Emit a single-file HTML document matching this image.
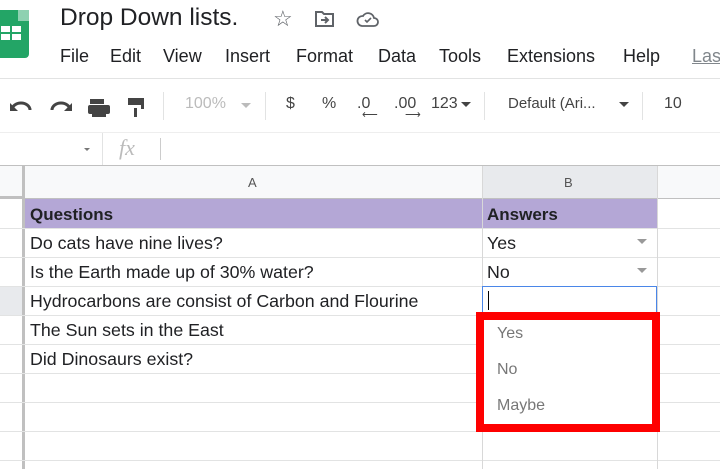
<!DOCTYPE html><html><head><style>
body{margin:0;width:720px;height:469px;overflow:hidden;background:#fff;font-family:"Liberation Sans",Arial,sans-serif;position:relative}
.a{position:absolute}
.m{font-size:18px;color:#202124;top:46px}
.t{color:#444;font-size:16px;top:95px}
.hl{position:absolute;left:0;width:720px;height:1px;background:#e2e3e3}
.vl{position:absolute;width:1px;background:#e2e3e3}
.c{position:absolute;font-size:17.8px;color:#202124;left:30px}
</style></head><body>
<div class="a" style="left:-6px;top:10px;width:35px;height:48px;background:#23a566;border-radius:4px"></div>
<div class="a" style="left:18px;top:10px;width:11px;height:11px;background:#8ed1b1"></div>
<div class="a" style="left:1px;top:26px;width:9px;height:6px;background:#fff"></div>
<div class="a" style="left:12px;top:26px;width:9px;height:6px;background:#fff"></div>
<div class="a" style="left:1px;top:34px;width:9px;height:6px;background:#fff"></div>
<div class="a" style="left:12px;top:34px;width:9px;height:6px;background:#fff"></div>
<div class="a" style="left:60px;top:4px;font-size:24.5px;color:#202124">Drop Down lists.</div>
<div class="a" style="left:273px;top:6px;font-size:22px;color:#5f6368">☆</div>
<svg class="a" style="left:314px;top:10px" width="22" height="18" viewBox="0 0 22 18"><path d="M2 2h6l2 2h9v12H2z" fill="none" stroke="#5f6368" stroke-width="2"/><path d="M7 10h7M11 7l3 3-3 3" fill="none" stroke="#5f6368" stroke-width="2"/></svg>
<svg class="a" style="left:356px;top:10px" width="24" height="18" viewBox="0 0 24 18"><path d="M6 16h12a4 4 0 0 0 0-8 6 6 0 0 0-11-2A5 5 0 0 0 6 16z" fill="none" stroke="#5f6368" stroke-width="1.8"/><path d="M9 10l2 2 4-4" fill="none" stroke="#5f6368" stroke-width="1.6"/></svg>
<div class="a m" style="left:60px">File</div>
<div class="a m" style="left:110px">Edit</div>
<div class="a m" style="left:163px">View</div>
<div class="a m" style="left:225px">Insert</div>
<div class="a m" style="left:296px">Format</div>
<div class="a m" style="left:378px">Data</div>
<div class="a m" style="left:439px">Tools</div>
<div class="a m" style="left:507px">Extensions</div>
<div class="a m" style="left:623px">Help</div>
<div class="a m" style="left:692px;color:#80868b;text-decoration:underline">Las</div>
<div class="hl" style="top:78px"></div>
<svg class="a" style="left:8px;top:96px" width="140" height="24" viewBox="0 0 140 24"><path d="M4 14a9 7 0 0 1 18 0" fill="none" stroke="#444" stroke-width="3"/><path d="M2 7v8h8z" fill="#444"/><path d="M62 14a9 7 0 0 0-18 0" fill="none" stroke="#444" stroke-width="3"/><path d="M64 7v8h-8z" fill="#444"/><rect x="82" y="3" width="14" height="5" fill="#444"/><rect x="80" y="9" width="22" height="9" rx="2" fill="#444"/><rect x="84" y="15" width="14" height="6" fill="#444"/><rect x="120" y="2" width="16" height="7" fill="#444"/><rect x="133" y="7" width="3" height="6" fill="#444"/><rect x="126" y="12" width="3" height="9" fill="#444"/></svg>
<div class="vl" style="left:163px;top:92px;height:28px"></div>
<div class="a t" style="left:185px;color:#bbb">100%</div>
<div class="a" style="left:241px;top:103px;border:5px solid transparent;border-top-color:#bbb"></div>
<div class="vl" style="left:265px;top:92px;height:28px"></div>
<div class="a t" style="left:286px">$</div>
<div class="a t" style="left:322px">%</div>
<div class="a t" style="left:357px">.0</div>
<div class="a" style="left:362px;top:108px;font-size:11px;color:#444">⟵</div>
<div class="a t" style="left:394px">.00</div>
<div class="a" style="left:405px;top:108px;font-size:11px;color:#444">⟶</div>
<div class="a t" style="left:431px">123</div>
<div class="a" style="left:461px;top:102px;border:5px solid transparent;border-top-color:#444"></div>
<div class="vl" style="left:484px;top:92px;height:28px"></div>
<div class="a t" style="left:508px;font-size:15px">Default (Ari...</div>
<div class="a" style="left:619px;top:102px;border:5px solid transparent;border-top-color:#444"></div>
<div class="vl" style="left:642px;top:92px;height:28px"></div>
<div class="a t" style="left:664px">10</div>
<div class="hl" style="top:132px;background:#eee"></div>
<div class="a" style="left:84px;top:148px;border:3.5px solid transparent;border-top-color:#777"></div>
<div class="vl" style="left:102px;top:133px;height:32px"></div>
<div class="a" style="left:119px;top:135px;font-size:22px;font-style:italic;font-family:'Liberation Serif',serif;color:#bbb">fx</div>
<div class="vl" style="left:160px;top:138px;height:22px;background:#ccc"></div>
<div class="hl" style="top:165px;background:#c0c0c0"></div>
<div class="a" style="left:0;top:166px;width:720px;height:32px;background:#f8f9fa"></div>
<div class="a" style="left:482px;top:166px;width:175px;height:32px;background:#e8eaed"></div>
<div class="a" style="left:22px;top:166px;width:3px;height:303px;background:#c0c0c0"></div>
<div class="a" style="left:0;top:196px;width:25px;height:3px;background:#c0c0c0"></div>
<div class="a" style="left:0;top:198px;width:720px;height:1px;background:#c0c0c0"></div>
<div class="a" style="left:248px;top:175px;font-size:13px;color:#555">A</div>
<div class="a" style="left:564px;top:175px;font-size:13px;color:#555">B</div>
<div class="a" style="left:0;top:287px;width:22px;height:28px;background:#e8eaed"></div>
<div class="a" style="left:25px;top:199px;width:632px;height:29px;background:#b4a7d6"></div>
<div class="hl" style="top:228px"></div><div class="hl" style="top:257px"></div><div class="hl" style="top:286px"></div>
<div class="hl" style="top:315px"></div><div class="hl" style="top:344px"></div><div class="hl" style="top:373px"></div>
<div class="hl" style="top:402px"></div><div class="hl" style="top:431px"></div><div class="hl" style="top:460px"></div>
<div class="vl" style="left:482px;top:166px;height:303px;background:#d8d8d8"></div>
<div class="vl" style="left:657px;top:166px;height:303px;background:#d8d8d8"></div>
<div class="c" style="top:205px;font-weight:bold;font-size:17px">Questions</div>
<div class="c" style="left:487px;top:205px;font-weight:bold;font-size:17px">Answers</div>
<div class="c" style="top:233px">Do cats have nine lives?</div>
<div class="c" style="top:262px">Is the Earth made up of 30% water?</div>
<div class="c" style="top:291px">Hydrocarbons are consist of Carbon and Flourine</div>
<div class="c" style="top:320px">The Sun sets in the East</div>
<div class="c" style="top:349px">Did Dinosaurs exist?</div>
<div class="c" style="left:487px;top:233px">Yes</div>
<div class="c" style="left:487px;top:262px">No</div>
<div class="a" style="left:637px;top:239px;border:5px solid transparent;border-top-color:#999"></div>
<div class="a" style="left:637px;top:268px;border:5px solid transparent;border-top-color:#999"></div>
<div class="a" style="left:482px;top:286px;width:173px;height:28px;border:1px solid #4a86e8;background:#fff"></div>
<div class="a" style="left:488px;top:291px;width:1px;height:19px;background:#000"></div>
<div class="a" style="left:476px;top:312px;width:168px;height:104px;border:8px solid #fe0000;background:#fff"></div>
<div class="a" style="left:497px;top:325px;font-size:16px;color:#777">Yes</div>
<div class="a" style="left:497px;top:361px;font-size:16px;color:#777">No</div>
<div class="a" style="left:497px;top:397px;font-size:16px;color:#777">Maybe</div>
</body></html>
